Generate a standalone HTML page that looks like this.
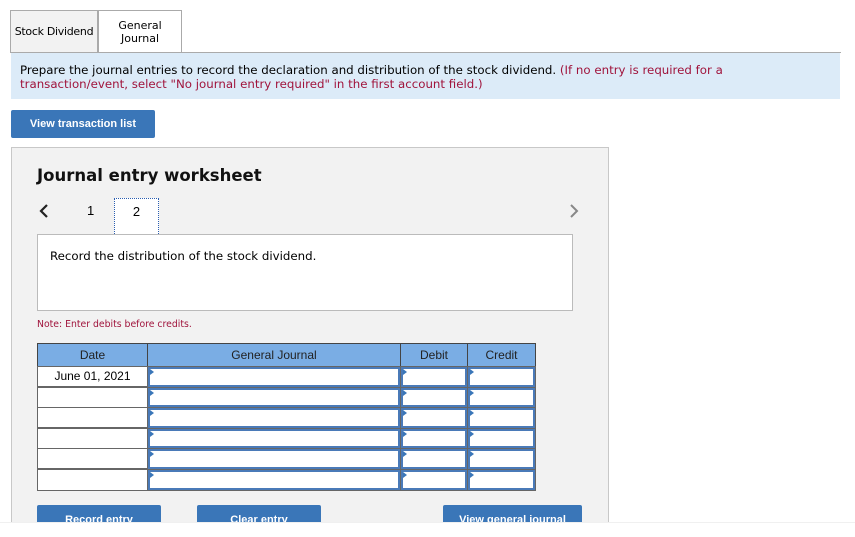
<!DOCTYPE html><html><head><style>
*{margin:0;padding:0;box-sizing:border-box}
html,body{width:855px;height:537px;overflow:hidden}
body{background:#fff;position:relative;font-family:"DejaVu Sans",Verdana,sans-serif;}
.a{position:absolute}
.ar{font-family:"Liberation Sans",Arial,sans-serif}
.btn{position:absolute;background:#3a76b8;color:#fff;font-family:"Liberation Sans",Arial,sans-serif;font-weight:bold;font-size:11px;text-align:center;border-radius:2px}
.c{position:absolute;background:#fff;border:1px solid #666}
.in{position:absolute;border:2px solid #4a7ab8;background:#fff}
.in:before{content:"";position:absolute;left:0;top:0;border-left:4px solid #3a76b8;border-top:3px solid transparent;border-bottom:3px solid transparent}
.h{position:absolute;top:343px;height:24px;background:#7aade4;border:1px solid #444;text-align:center;line-height:22px;font-size:12px;color:#222;font-family:"Liberation Sans",Arial,sans-serif}
</style></head><body>
<div class="a" style="left:10px;top:10px;width:88px;height:43px;background:#f2f2f2;border:1px solid #aaa;border-bottom:none;font-size:11px;line-height:41px;text-align:center;letter-spacing:-0.3px">Stock Dividend</div>
<div class="a" style="left:98px;top:10px;width:84px;height:43px;background:#fff;border:1px solid #aaa;border-bottom:none;font-size:11px;line-height:13px;text-align:center;padding-top:8px">General<br>Journal</div>
<div class="a" style="left:10px;top:52px;width:831px;height:1px;background:#aaa"></div>
<div class="a" style="left:11px;top:53px;width:829px;height:46px;background:#dcebf8"></div>
<div class="a" style="left:20px;top:63px;width:725px;font-size:11.8px;line-height:14px;color:#000">Prepare the journal entries to record the declaration and distribution of the stock dividend. <span style="color:#a0143c">(If no entry is required for a transaction/event, select "No journal entry required" in the first account field.)</span></div>
<div class="btn" style="left:11px;top:110px;width:144px;height:28px;line-height:28px">View transaction list</div>
<div class="a" style="left:11px;top:147px;width:598px;height:380px;background:#f2f2f2;border:1px solid #c8c8c8"></div>
<div class="a" style="left:37px;top:166px;font-size:16.5px;font-weight:bold;color:#111">Journal entry worksheet</div>
<svg class="a" style="left:38px;top:203px" width="12" height="16"><path d="M9 2 L3 8 L9 14" stroke="#222" stroke-width="2.2" fill="none"/></svg>
<div class="a ar" style="left:87px;top:203px;font-size:13px">1</div>
<div class="a ar" style="left:114px;top:198px;width:45px;height:38px;background:#fff;border:1px dotted #2a5db0;border-bottom:none;text-align:center;font-size:13px;padding-top:5px">2</div>
<svg class="a" style="left:568px;top:203px" width="12" height="16"><path d="M3 2 L9 8 L3 14" stroke="#888" stroke-width="2" fill="none"/></svg>
<div class="a" style="left:37px;top:234px;width:536px;height:77px;background:#fff;border:1px solid #bbb;font-size:11.8px;padding:14px 12px">Record the distribution of the stock dividend.</div>
<div class="a" style="left:37px;top:319px;font-size:9.3px;color:#a0143c">Note: Enter debits before credits.</div>
<div class="h" style="left:37px;width:111px">Date</div>
<div class="h" style="left:147px;width:254px">General Journal</div>
<div class="h" style="left:400px;width:68px">Debit</div>
<div class="h" style="left:467px;width:69px">Credit</div>
<div class="c" style="left:37px;top:366px;width:111px;height:125px;background:#666"></div>
<div class="c ar" style="left:38px;top:367px;width:109px;height:19px;border:none;text-align:center;font-size:12px;line-height:19px">June 01, 2021</div>
<div class="c" style="left:38px;top:388px;width:109px;height:19px;border:none"></div>
<div class="c" style="left:38px;top:408px;width:109px;height:19px;border:none"></div>
<div class="c" style="left:38px;top:429px;width:109px;height:19px;border:none"></div>
<div class="c" style="left:38px;top:449px;width:109px;height:19px;border:none"></div>
<div class="c" style="left:38px;top:470px;width:109px;height:20px;border:none"></div>
<div class="a" style="left:147px;top:366px;width:389px;height:125px;background:#666"></div>
<div class="in" style="left:148px;top:367px;width:252px;height:20px"></div><div class="in" style="left:401px;top:367px;width:66px;height:20px"></div><div class="in" style="left:468px;top:367px;width:67px;height:20px"></div>
<div class="in" style="left:148px;top:388px;width:252px;height:19px"></div><div class="in" style="left:401px;top:388px;width:66px;height:19px"></div><div class="in" style="left:468px;top:388px;width:67px;height:19px"></div>
<div class="in" style="left:148px;top:408px;width:252px;height:20px"></div><div class="in" style="left:401px;top:408px;width:66px;height:20px"></div><div class="in" style="left:468px;top:408px;width:67px;height:20px"></div>
<div class="in" style="left:148px;top:429px;width:252px;height:19px"></div><div class="in" style="left:401px;top:429px;width:66px;height:19px"></div><div class="in" style="left:468px;top:429px;width:67px;height:19px"></div>
<div class="in" style="left:148px;top:449px;width:252px;height:20px"></div><div class="in" style="left:401px;top:449px;width:66px;height:20px"></div><div class="in" style="left:468px;top:449px;width:67px;height:20px"></div>
<div class="in" style="left:148px;top:470px;width:252px;height:20px"></div><div class="in" style="left:401px;top:470px;width:66px;height:20px"></div><div class="in" style="left:468px;top:470px;width:67px;height:20px"></div>
<div class="btn" style="left:37px;top:505px;width:124px;height:28px;padding-top:9px">Record entry</div>
<div class="btn" style="left:197px;top:505px;width:124px;height:28px;padding-top:9px">Clear entry</div>
<div class="btn" style="left:443px;top:505px;width:139px;height:28px;padding-top:9px">View general journal</div>
<div class="a" style="left:0;top:522px;width:855px;height:15px;background:#fff;border-top:1px solid #f0f0f0"></div>
</body></html>
